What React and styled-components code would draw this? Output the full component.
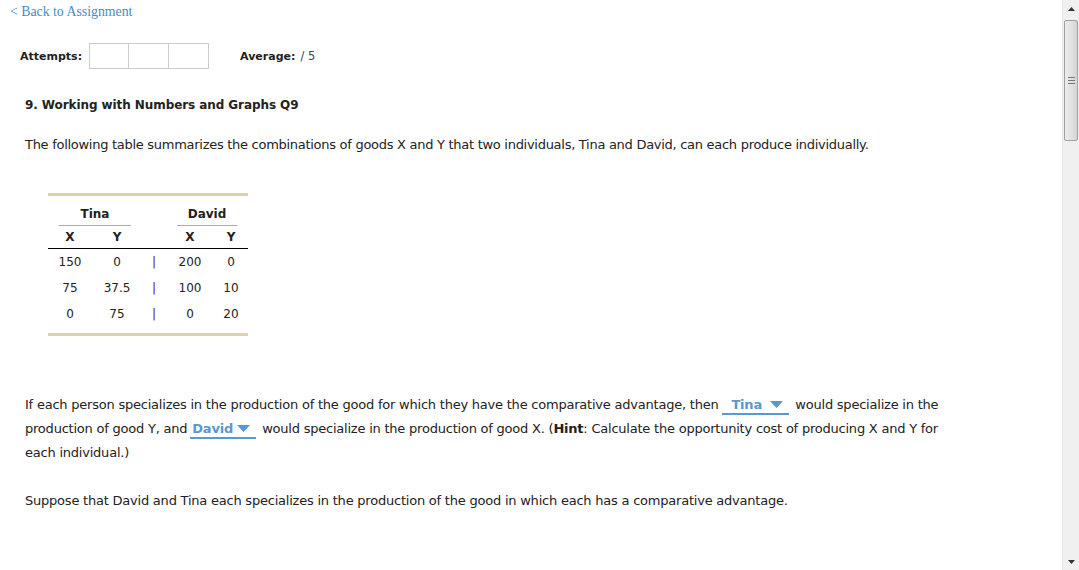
import React from "react";
import styled, { createGlobalStyle } from "styled-components";

const Global = createGlobalStyle`
  html, body { margin: 0; padding: 0; background: #fff; overflow: hidden; }
  body { font-family: "DejaVu Sans", Verdana, sans-serif; color: #222; }
`;

const Frame = styled.div`
  display: flex;
  width: 1079px;
  height: 570px;
`;

const Main = styled.main`
  flex: 1;
  height: 570px;
  overflow: hidden;
  font-size: 13px;
`;

const BackLink = styled.a`
  display: block;
  margin: 4px 0 0 10px;
  font-family: "Liberation Serif", "DejaVu Serif", serif;
  font-size: 13.8px;
  line-height: 15px;
  color: #3f8dc9;
  text-decoration: none;
`;

const AttemptsRow = styled.div`
  display: flex;
  align-items: center;
  margin: 24px 0 0 20px;
  height: 26px;
`;

const Label = styled.span`
  font-weight: bold;
  font-size: 11px;
  margin-right: ${(p) => p.$gap || 8}px;
`;

const Boxes = styled.div`
  display: flex;
  margin-right: 31px;
`;

const Box = styled.div`
  width: 38px;
  height: 24px;
  border: 1px solid #cccccc;
  & + & { border-left: none; width: 39px; }
`;

const Score = styled.span`
  font-size: 11.5px;
  color: #444;
`;

const Heading = styled.h2`
  margin: 28px 0 0 25px;
  font-size: 12px;
  letter-spacing: -0.08px;
  line-height: 16px;
  font-weight: bold;
`;

const Para = styled.p`
  margin: ${(p) => p.$top}px 0 0 25px;
  width: 930px;
  font-size: 13px;
  letter-spacing: ${(p) => p.$ls ?? -0.28}px;
  line-height: 24px;
`;

const DataTable = styled.div`
  margin: 36px 0 0 48px;
  width: 200px;
  border-top: 3px solid #dcd2a8;
  border-bottom: 3px solid #dcd2a8;
  display: grid;
  grid-template-columns: 44px 50px 24px 48px 34px;
  font-size: 12px;
  padding-bottom: 6px;
`;

const Group = styled.div`
  grid-column: span ${(p) => p.$span || 1};
  padding-top: 11px;
`;

const GroupLabel = styled.div`
  margin: 0 11px 0 11px;
  padding-bottom: 4px;
  border-bottom: 1px solid #aaaaaa;
  text-align: center;
  font-weight: bold;
  line-height: 14px;
`;

const AxisCell = styled.div`
  text-align: center;
  font-weight: bold;
  line-height: 14px;
  padding: 4px 0 4px;
  border-bottom: 1px solid #000;
`;

const Cell = styled.div`
  text-align: center;
  line-height: 26px;
  color: ${(p) => (p.$sep ? "#5a0a5a" : "#222")};
`;

const Dropdown = styled.span`
  display: inline-flex;
  align-items: center;
  justify-content: space-between;
  width: ${(p) => p.$w}px;
  box-sizing: border-box;
  padding: 0 6px 1px ${(p) => p.$pl}px;
  border-bottom: 2px solid #5a98cf;
  color: #5a98cf;
  font-weight: bold;
  letter-spacing: -0.2px;
  line-height: 15px;
  margin: 0 2px 0 ${(p) => p.$ml || 0}px;
`;

const Caret = styled.svg`
  width: 13px;
  height: 7px;
`;

const Scrollbar = styled.div`
  width: 17px;
  height: 570px;
  background: #f0f0f0;
  border-left: 1px solid #e8e8e8;
  box-sizing: border-box;
  display: flex;
  flex-direction: column;
`;

const ArrowBtn = styled.div`
  height: 17px;
  display: flex;
  align-items: center;
  justify-content: center;
`;

const Track = styled.div`
  flex: 1;
  padding: 3px 1px 0 1px;
`;

const Thumb = styled.div`
  height: 119px;
  border: 1px solid #a0a0a0;
  border-radius: 2px;
  background: linear-gradient(to right, #ececec 0%, #e2e2e2 50%, #d4d4d4 100%);
  display: flex;
  align-items: center;
  justify-content: center;
`;

const Grip = styled.svg`
  width: 7px;
  height: 8px;
`;

function Drop({ label, w, pl, ml }) {
  return (
    <Dropdown $w={w} $pl={pl} $ml={ml}>
      <span>{label}</span>
      <Caret viewBox="0 0 13 7">
        <polygon points="0,0 13,0 6.5,7" fill="#5a98cf" />
      </Caret>
    </Dropdown>
  );
}

const rows = [
  ["150", "0", "200", "0"],
  ["75", "37.5", "100", "10"],
  ["0", "75", "0", "20"],
];

export default function App() {
  return (
    <>
      <Global />
      <Frame>
        <Main>
          <BackLink href="#">&lt; Back to Assignment</BackLink>
          <AttemptsRow>
            <Label $gap={7}>Attempts:</Label>
            <Boxes>
              <Box />
              <Box />
              <Box />
            </Boxes>
            <Label $gap={5}>Average:</Label>
            <Score>/ 5</Score>
          </AttemptsRow>
          <Heading>9. Working with Numbers and Graphs Q9</Heading>
          <Para $top={20}>
            The following table summarizes the combinations of goods X and Y that two individuals, Tina and
            David, can each produce individually.
          </Para>
          <DataTable>
            <Group $span={2}>
              <GroupLabel>Tina</GroupLabel>
            </Group>
            <Group />
            <Group $span={2}>
              <GroupLabel>David</GroupLabel>
            </Group>
            <AxisCell>X</AxisCell>
            <AxisCell>Y</AxisCell>
            <AxisCell />
            <AxisCell>X</AxisCell>
            <AxisCell>Y</AxisCell>
            {rows.map((r, i) => (
              <React.Fragment key={i}>
                <Cell>{r[0]}</Cell>
                <Cell>{r[1]}</Cell>
                <Cell $sep>|</Cell>
                <Cell>{r[2]}</Cell>
                <Cell>{r[3]}</Cell>
              </React.Fragment>
            ))}
          </DataTable>
          <Para $top={57} $ls={-0.22}>
            If each person specializes in the production of the good for which they have the comparative
            advantage, then <Drop label="Tina" w={67} pl={9} /> would specialize in the production of good Y,
            and <Drop label="David" w={66} pl={2} ml={-1} /> would specialize in the production of good X. (
            <b>Hint</b>: Calculate the opportunity cost of producing X and Y for each individual.)
          </Para>
          <Para $top={24} $ls={-0.22}>
            Suppose that David and Tina each specializes in the production of the good in which each has a
            comparative advantage.
          </Para>
        </Main>
        <Scrollbar>
          <ArrowBtn>
            <svg width="7" height="4" viewBox="0 0 7 4">
              <polygon points="3.5,0 7,4 0,4" fill="#333" />
            </svg>
          </ArrowBtn>
          <Track>
            <Thumb>
              <Grip viewBox="0 0 7 8">
                <rect x="0" y="0" width="7" height="1" fill="#777" />
                <rect x="0" y="3" width="7" height="1" fill="#777" />
                <rect x="0" y="6" width="7" height="1" fill="#777" />
              </Grip>
            </Thumb>
          </Track>
          <ArrowBtn>
            <svg width="7" height="4" viewBox="0 0 7 4">
              <polygon points="0,0 7,0 3.5,4" fill="#333" />
            </svg>
          </ArrowBtn>
        </Scrollbar>
      </Frame>
    </>
  );
}
